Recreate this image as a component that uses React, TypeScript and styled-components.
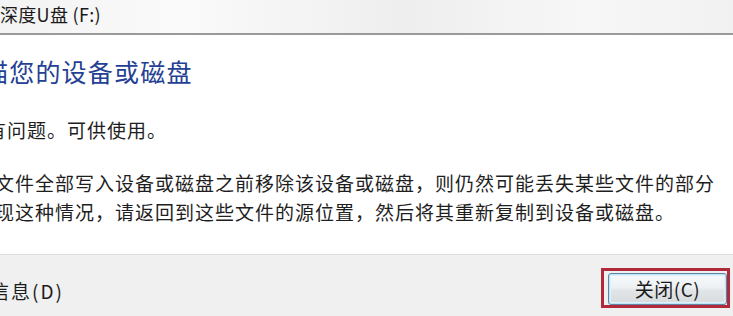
import React from "react";
import styled, { createGlobalStyle } from "styled-components";

const GlobalStyle = createGlobalStyle`
  html, body {
    margin: 0;
    padding: 0;
    background: #ffffff;
    overflow: hidden;
  }
  body {
    font-family: "Noto Sans CJK SC", "Noto Sans", "Liberation Sans", sans-serif;
    color: #1c1c1c;
  }
`;

const Window = styled.div`
  width: 733px;
  height: 316px;
  display: flex;
  flex-direction: column;
  overflow: hidden;
`;

const TitleBar = styled.div`
  box-sizing: border-box;
  height: 35px;
  padding-top: 1px;
  display: flex;
  align-items: flex-start;
  background: linear-gradient(
    90deg,
    #f3f3f3 0%,
    #fafafa 25%,
    #eeeeee 55%,
    #f7f7f7 80%,
    #f1f1f1 100%
  );
  border-bottom: 2px solid #9a9a9a;
  box-shadow: 0 1px 0 #d8d8d8;
`;

const TitleText = styled.span`
  font-size: 18px;
  line-height: 26px;
  letter-spacing: 0.3px;
  color: #1a1a1a;
  white-space: nowrap;
`;

const Content = styled.div`
  flex: 1;
  background: #ffffff;
  display: flex;
  flex-direction: column;
  padding-top: 21px;
`;

const Heading = styled.h1<{ $shift: number }>`
  margin: 0;
  font-size: 25px;
  font-weight: 400;
  line-height: 30px;
  letter-spacing: 1.2px;
  color: #243f93;
  white-space: nowrap;
  text-indent: ${(p) => p.$shift}px;
`;

const Line = styled.p<{ $shift: number; $gap?: number }>`
  margin: ${(p) => p.$gap ?? 0}px 0 0 0;
  font-size: 19px;
  line-height: 29px;
  letter-spacing: 1px;
  color: #1e1e1e;
  white-space: nowrap;
  text-indent: ${(p) => p.$shift}px;
`;

const Footer = styled.div`
  box-sizing: border-box;
  height: 62px;
  border-top: 1px solid #dcdcdc;
  background: #f0f0f0;
  display: flex;
  align-items: flex-start;
  justify-content: space-between;
`;

const DetailsLink = styled.span<{ $shift: number }>`
  margin-top: 24px;
  font-size: 19px;
  line-height: 24px;
  letter-spacing: 2px;
  color: #1c1c1c;
  white-space: nowrap;
  text-indent: ${(p) => p.$shift}px;
  display: block;
`;

const Highlight = styled.div`
  margin-top: 13px;
  margin-right: 3px;
  border: 3px solid #b02a3b;
  padding: 2px 0 0 4px;
  display: flex;
`;

const CloseButton = styled.button`
  box-sizing: border-box;
  width: 119px;
  height: 32px;
  padding: 0;
  border: 1px solid #5f86a6;
  border-radius: 3px;
  background: linear-gradient(#f7fafc 0%, #eef1f3 45%, #e2e5e7 55%, #d8dbdd 100%);
  box-shadow: inset 0 0 0 1px #bfe4f5, inset 0 0 0 2px #dff1fa;
  font-family: "Noto Sans CJK SC", "Noto Sans", sans-serif;
  font-size: 19px;
  line-height: 28px;
  letter-spacing: 0.5px;
  color: #1a1a1a;
`;

export default function App() {
  return (
    <>
      <GlobalStyle />
      <Window>
        <TitleBar>
          <TitleText>深度U盘 (F:)</TitleText>
        </TitleBar>
        <Content>
          <Heading $shift={-17}>描您的设备或磁盘</Heading>
          <Line $shift={-13} $gap={29}>
            有问题。可供使用。
          </Line>
          <Line $shift={-5} $gap={24}>
            文件全部写入设备或磁盘之前移除该设备或磁盘，则仍然可能丢失某些文件的部分
          </Line>
          <Line $shift={-5}>
            现这种情况，请返回到这些文件的源位置，然后将其重新复制到设备或磁盘。
          </Line>
        </Content>
        <Footer>
          <DetailsLink $shift={-10}>信息(D)</DetailsLink>
          <Highlight>
            <CloseButton>关闭(C)</CloseButton>
          </Highlight>
        </Footer>
      </Window>
    </>
  );
}
